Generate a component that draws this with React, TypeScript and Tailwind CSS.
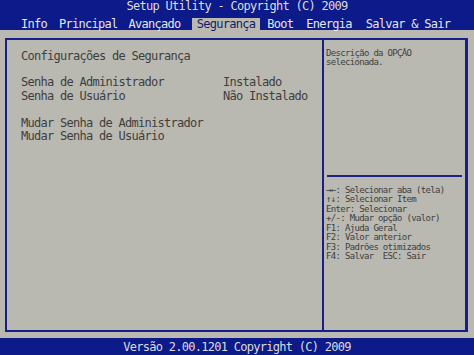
import React from "react";

const BLUE = "bg-[#0c1a8a]";

export default function App() {
  return (
    <div className="w-[474px] h-[355px] flex flex-col bg-[#b9b9b1] overflow-hidden font-['DejaVu_Sans_Mono','Liberation_Mono',monospace]">
      <header className={`h-[30px] ${BLUE} flex flex-col`}>
        <div className="h-[13px] leading-[13px] text-center text-[12px] tracking-[-0.72px] text-[#dcdcdc]">
          Setup Utility - Copyright (C) 2009
        </div>
        <nav className="mt-[5px] h-[12px] flex text-[12px] leading-[13px] tracking-[-0.72px] text-[#e6e6e6]">
          <span className="ml-[16px] px-[5px]">Info</span>
          <span className="ml-[2px] px-[5px]">Principal</span>
          <span className="ml-[1px] px-[5px]">Avançado</span>
          <span className="ml-[6px] px-[5px] bg-[#b9b9b1] text-[#141a6e]">Segurança</span>
          <span className="ml-[2px] px-[5px]">Boot</span>
          <span className="ml-[3px] px-[5px]">Energia</span>
          <span className="ml-[4px] px-[5px]">Salvar &amp; Sair</span>
        </nav>
      </header>

      <main className="flex-1 pt-[8px] pb-[6px] pl-[5px] pr-[6px]">
        <div className="h-full flex border-2 border-r-[3px] border-[#17208a]">
          <section className="w-[317px] border-r-2 border-[#17208a] pt-[9.5px] pl-[14px] text-[12px] leading-[13.4px] tracking-[-0.72px] text-[#3e3e3e]">
            <div>Configurações de Segurança</div>
            <div className="h-[13.4px]" />
            <div className="flex">
              <span className="w-[202px]">Senha de Administrador</span>
              <span>Instalado</span>
            </div>
            <div className="flex">
              <span className="w-[202px]">Senha de Usuário</span>
              <span>Não Instalado</span>
            </div>
            <div className="h-[13.4px]" />
            <div>Mudar Senha de Administrador</div>
            <div>Mudar Senha de Usuário</div>
          </section>

          <aside className="flex-1 flex flex-col text-[9px] leading-[9.45px] tracking-[-0.68px] text-[#3e3e3e]">
            <div className="h-[135px] pt-[8.5px] pl-[2px]">
              <div>Descrição da OPÇÃO</div>
              <div>selecionada.</div>
            </div>
            <div className="mx-[3px] h-[2px] bg-[#1c2384]" />
            <div className="pt-[9px] pl-[2px]">
              <div>→←: Selecionar aba (tela)</div>
              <div>↑↓: Selecionar Item</div>
              <div>Enter: Selecionar</div>
              <div>+/-: Mudar opção (valor)</div>
              <div>F1: Ajuda Geral</div>
              <div>F2: Valor anterior</div>
              <div>F3: Padrões otimizados</div>
              <div>F4: Salvar&nbsp;&nbsp;ESC: Sair</div>
            </div>
          </aside>
        </div>
      </main>

      <footer className={`h-[17px] ${BLUE} flex items-center justify-center pt-[2px] text-[12px] leading-[13px] tracking-[-0.72px] text-[#dcdcdc]`}>
        Versão 2.00.1201 Copyright (C) 2009
      </footer>
    </div>
  );
}
